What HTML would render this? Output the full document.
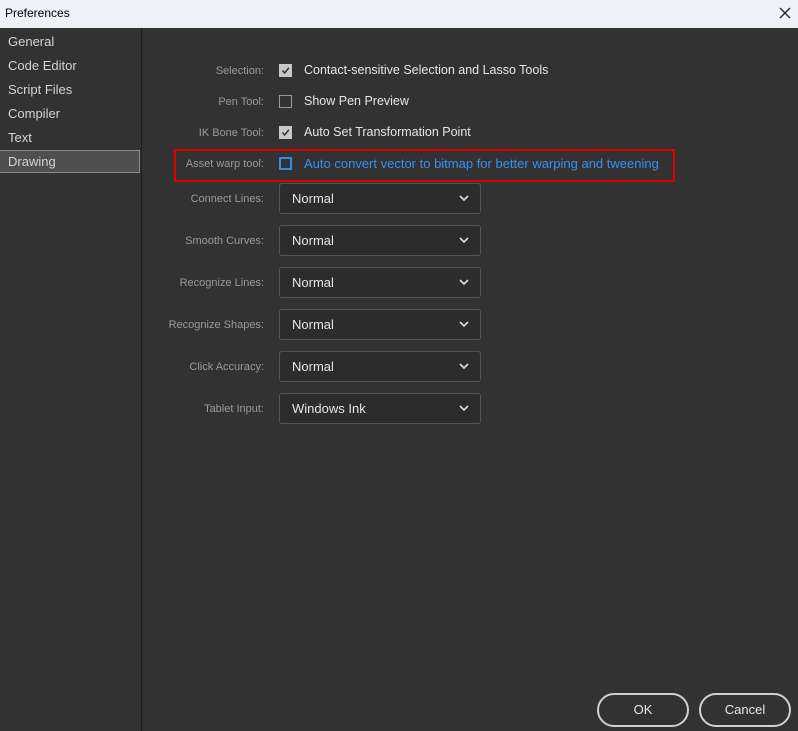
<!DOCTYPE html>
<html><head><style>
body{margin:0;width:798px;height:731px;background:#323232;font-family:"Liberation Sans",sans-serif;overflow:hidden;position:relative}
.title{position:absolute;left:0;top:0;width:798px;height:28px;background:#eef2f7;color:#000;font-size:12px}
.title span{position:absolute;left:5px;top:6px}
.side{position:absolute;left:0;top:28px;width:141px;height:703px;border-right:1px solid #1e1e1e}
.nav{position:absolute;left:8px;font-size:13px;color:#d4d4d4}
.sel{position:absolute;left:0;top:122px;width:139px;height:21px;background:#4f4f4f;border:1px solid #8a8a8a;border-left:none}
.lbl{position:absolute;right:534px;font-size:11px;color:#9a9a9a;white-space:nowrap}
.cb{position:absolute;left:279px;width:11px;height:11px;border:1px solid #9a9a9a;background:#323232}
.cb.on{background:#c8c8c8;border-color:#c8c8c8}
.cb.on svg{position:absolute;left:1px;top:1px}
.txt{position:absolute;left:304px;font-size:12.5px;color:#e6e6e6;white-space:nowrap}
.dd{position:absolute;left:279px;width:200px;height:29px;border:1px solid #555;border-radius:3px;background:#2c2c2c}
.dd span{position:absolute;left:12px;top:7px;font-size:13px;color:#e6e6e6}
.dd svg{position:absolute;right:11px;top:11px}
.btn{position:absolute;top:693px;width:88px;height:30px;border:2px solid #d0d0d0;border-radius:17px;color:#e6e6e6;font-size:13px;text-align:center;line-height:30px}
</style></head><body>
<div class="title"><span>Preferences</span>
<svg style="position:absolute;left:779px;top:7px" width="12" height="12"><path d="M1 1L11 11M11 1L1 11" stroke="#222" stroke-width="1.3"/></svg></div>
<div class="side">
<div class="sel"></div>
<div class="nav" style="top:6px">General</div>
<div class="nav" style="top:30px">Code Editor</div>
<div class="nav" style="top:54px">Script Files</div>
<div class="nav" style="top:78px">Compiler</div>
<div class="nav" style="top:102px">Text</div>
<div class="nav" style="top:126px">Drawing</div>
</div>
<div style="position:absolute;left:174px;top:149px;width:497px;height:29px;border:2px solid #e00000"></div>
<div class="lbl" style="top:65px">Selection:</div>
<div class="lbl" style="top:96px">Pen Tool:</div>
<div class="lbl" style="top:127px">IK Bone Tool:</div>
<div class="lbl" style="top:158px">Asset warp tool:</div>
<div class="cb on" style="top:64px"><svg width="9" height="9"><path d="M1.5 4.5L3.7 7L7.8 1.8" stroke="#333" stroke-width="1.5" fill="none"/></svg></div>
<div class="cb" style="top:95px"></div>
<div class="cb on" style="top:126px"><svg width="9" height="9"><path d="M1.5 4.5L3.7 7L7.8 1.8" stroke="#333" stroke-width="1.5" fill="none"/></svg></div>
<div class="cb" style="top:157px;border:2px solid #2d8ceb;width:9px;height:9px"></div>
<div class="txt" style="top:63px">Contact-sensitive Selection and Lasso Tools</div>
<div class="txt" style="top:94px">Show Pen Preview</div>
<div class="txt" style="top:125px">Auto Set Transformation Point</div>
<div class="txt" style="top:156px;color:#3a8ff0;font-size:13px">Auto convert vector to bitmap for better warping and tweening</div>

<div class="lbl" style="top:193px">Connect Lines:</div>
<div class="lbl" style="top:235px">Smooth Curves:</div>
<div class="lbl" style="top:277px">Recognize Lines:</div>
<div class="lbl" style="top:319px">Recognize Shapes:</div>
<div class="lbl" style="top:361px">Click Accuracy:</div>
<div class="lbl" style="top:403px">Tablet Input:</div>

<div class="dd" style="top:183px"><span>Normal</span><svg width="10" height="7"><path d="M1 1L5 5L9 1" stroke="#ddd" stroke-width="1.6" fill="none"/></svg></div>
<div class="dd" style="top:225px"><span>Normal</span><svg width="10" height="7"><path d="M1 1L5 5L9 1" stroke="#ddd" stroke-width="1.6" fill="none"/></svg></div>
<div class="dd" style="top:267px"><span>Normal</span><svg width="10" height="7"><path d="M1 1L5 5L9 1" stroke="#ddd" stroke-width="1.6" fill="none"/></svg></div>
<div class="dd" style="top:309px"><span>Normal</span><svg width="10" height="7"><path d="M1 1L5 5L9 1" stroke="#ddd" stroke-width="1.6" fill="none"/></svg></div>
<div class="dd" style="top:351px"><span>Normal</span><svg width="10" height="7"><path d="M1 1L5 5L9 1" stroke="#ddd" stroke-width="1.6" fill="none"/></svg></div>
<div class="dd" style="top:393px"><span>Windows Ink</span><svg width="10" height="7"><path d="M1 1L5 5L9 1" stroke="#ddd" stroke-width="1.6" fill="none"/></svg></div>

<div class="btn" style="left:597px">OK</div>
<div class="btn" style="left:699px">Cancel</div>
</body></html>
